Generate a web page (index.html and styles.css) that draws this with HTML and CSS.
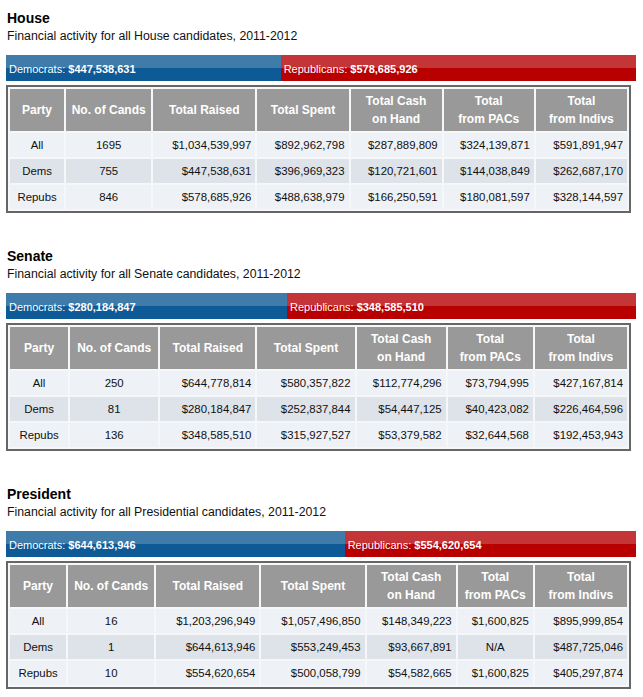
FILE: index.html
```html
<!DOCTYPE html>
<html>
<head>
<meta charset="utf-8">
<link rel="stylesheet" href="styles.css">
</head>
<body>
<div class="page">

<section class="race">
  <h2 class="race-title">House</h2>
  <p class="race-sub">Financial activity for all House candidates, 2011-2012</p>
  <div class="split">
    <div class="split-dem" style="width:43.6%">Democrats: <b>$447,538,631</b></div>
    <div class="split-rep">Republicans: <b>$578,685,926</b></div>
  </div>
  <table class="fin fin-house">
    <thead>
      <tr><th>Party</th><th>No. of Cands</th><th>Total Raised</th><th>Total Spent</th><th>Total Cash<br>on Hand</th><th>Total<br>from PACs</th><th>Total<br>from Indivs</th></tr>
    </thead>
    <tbody>
      <tr><td class="c">All</td><td class="c">1695</td><td>$1,034,539,997</td><td>$892,962,798</td><td>$287,889,809</td><td>$324,139,871</td><td>$591,891,947</td></tr>
      <tr><td class="c">Dems</td><td class="c">755</td><td>$447,538,631</td><td>$396,969,323</td><td>$120,721,601</td><td>$144,038,849</td><td>$262,687,170</td></tr>
      <tr><td class="c">Repubs</td><td class="c">846</td><td>$578,685,926</td><td>$488,638,979</td><td>$166,250,591</td><td>$180,081,597</td><td>$328,144,597</td></tr>
    </tbody>
  </table>
</section>

<section class="race">
  <h2 class="race-title">Senate</h2>
  <p class="race-sub">Financial activity for all Senate candidates, 2011-2012</p>
  <div class="split">
    <div class="split-dem" style="width:44.6%">Democrats: <b>$280,184,847</b></div>
    <div class="split-rep">Republicans: <b>$348,585,510</b></div>
  </div>
  <table class="fin fin-senate">
    <thead>
      <tr><th>Party</th><th>No. of Cands</th><th>Total Raised</th><th>Total Spent</th><th>Total Cash<br>on Hand</th><th>Total<br>from PACs</th><th>Total<br>from Indivs</th></tr>
    </thead>
    <tbody>
      <tr><td class="c">All</td><td class="c">250</td><td>$644,778,814</td><td>$580,357,822</td><td>$112,774,296</td><td>$73,794,995</td><td>$427,167,814</td></tr>
      <tr><td class="c">Dems</td><td class="c">81</td><td>$280,184,847</td><td>$252,837,844</td><td>$54,447,125</td><td>$40,423,082</td><td>$226,464,596</td></tr>
      <tr><td class="c">Repubs</td><td class="c">136</td><td>$348,585,510</td><td>$315,927,527</td><td>$53,379,582</td><td>$32,644,568</td><td>$192,453,943</td></tr>
    </tbody>
  </table>
</section>

<section class="race">
  <h2 class="race-title">President</h2>
  <p class="race-sub">Financial activity for all Presidential candidates, 2011-2012</p>
  <div class="split">
    <div class="split-dem" style="width:53.75%">Democrats: <b>$644,613,946</b></div>
    <div class="split-rep">Republicans: <b>$554,620,654</b></div>
  </div>
  <table class="fin fin-pres">
    <thead>
      <tr><th>Party</th><th>No. of Cands</th><th>Total Raised</th><th>Total Spent</th><th>Total Cash<br>on Hand</th><th>Total<br>from PACs</th><th>Total<br>from Indivs</th></tr>
    </thead>
    <tbody>
      <tr><td class="c">All</td><td class="c">16</td><td>$1,203,296,949</td><td>$1,057,496,850</td><td>$148,349,223</td><td>$1,600,825</td><td>$895,999,854</td></tr>
      <tr><td class="c">Dems</td><td class="c">1</td><td>$644,613,946</td><td>$553,249,453</td><td>$93,667,891</td><td class="c">N/A</td><td>$487,725,046</td></tr>
      <tr><td class="c">Repubs</td><td class="c">10</td><td>$554,620,654</td><td>$500,058,799</td><td>$54,582,665</td><td>$1,600,825</td><td>$405,297,874</td></tr>
    </tbody>
  </table>
</section>

</div>
</body>
</html>
```

FILE: styles.css
```css
html, body {
  margin: 0;
  padding: 0;
  background: #ffffff;
}

body {
  font-family: "Liberation Sans", Arial, sans-serif;
  color: #111;
}

.page {
  padding: 10px 6px 0 6px;
  width: 630px;
}

.race {
  margin-bottom: 35px;
}

.race-title {
  margin: 0;
  font-size: 14px;
  line-height: 16px;
  font-weight: bold;
  color: #000;
  padding-left: 1px;
}

.race-sub {
  margin: 3px 0 0 0;
  font-size: 12.3px;
  line-height: 14px;
  color: #111;
  padding-left: 1px;
}

.split {
  display: flex;
  height: 26px;
  margin-top: 12px;
  font-size: 11px;
  line-height: 29px;
  color: #fff;
  white-space: nowrap;
  overflow: hidden;
}

.split b {
  font-weight: bold;
}

.split-dem {
  flex: none;
  padding-left: 3px;
  box-sizing: border-box;
  background: linear-gradient(to bottom, #3f7caa 0, #3f7caa 50%, #0e5a97 50%, #0e5a97 100%);
}

.split-rep {
  flex: 1;
  padding-left: 3px;
  background: linear-gradient(to bottom, #c43538 0, #c43538 50%, #b80000 50%, #b80000 100%);
}

.fin {
  margin-top: 4px;
  width: 625px;
  border: 2px solid #666;
  border-spacing: 2px;
  background: #f5f7f9;
  table-layout: fixed;
}

.fin th {
  background: #999999;
  color: #fff;
  font-size: 12px;
  line-height: 18px;
  font-weight: bold;
  padding: 3px 2px;
  height: 36px;
  text-align: center;
  white-space: nowrap;
}

.fin td {
  font-size: 11.4px;
  line-height: 16px;
  height: 16px;
  padding: 4px 4px 4px 0;
  text-align: right;
  color: #111;
  white-space: nowrap;
}

.fin td.c {
  text-align: center;
  padding-left: 2px;
  padding-right: 2px;
}

.fin tbody tr:nth-child(odd) td {
  background: #eef1f5;
}

.fin tbody tr:nth-child(even) td {
  background: #dee3ea;
}

/* column widths (content width; cell adds 4px padding) */
.fin-house th:nth-child(1) { width: 50px; }
.fin-house th:nth-child(2) { width: 81px; }
.fin-house th:nth-child(3) { width: 98px; }
.fin-house th:nth-child(4) { width: 87px; }
.fin-house th:nth-child(5) { width: 87px; }
.fin-house th:nth-child(6) { width: 86px; }
.fin-house th:nth-child(7) { width: 87px; }

.fin-senate th:nth-child(1) { width: 54px; }
.fin-senate th:nth-child(2) { width: 84px; }
.fin-senate th:nth-child(3) { width: 91px; }
.fin-senate th:nth-child(4) { width: 93px; }
.fin-senate th:nth-child(5) { width: 85px; }
.fin-senate th:nth-child(6) { width: 81px; }
.fin-senate th:nth-child(7) { width: 88px; }

.fin-pres th:nth-child(1) { width: 52px; }
.fin-pres th:nth-child(2) { width: 82px; }
.fin-pres th:nth-child(3) { width: 99px; }
.fin-pres th:nth-child(4) { width: 99px; }
.fin-pres th:nth-child(5) { width: 85px; }
.fin-pres th:nth-child(6) { width: 71px; }
.fin-pres th:nth-child(7) { width: 88px; }
```
